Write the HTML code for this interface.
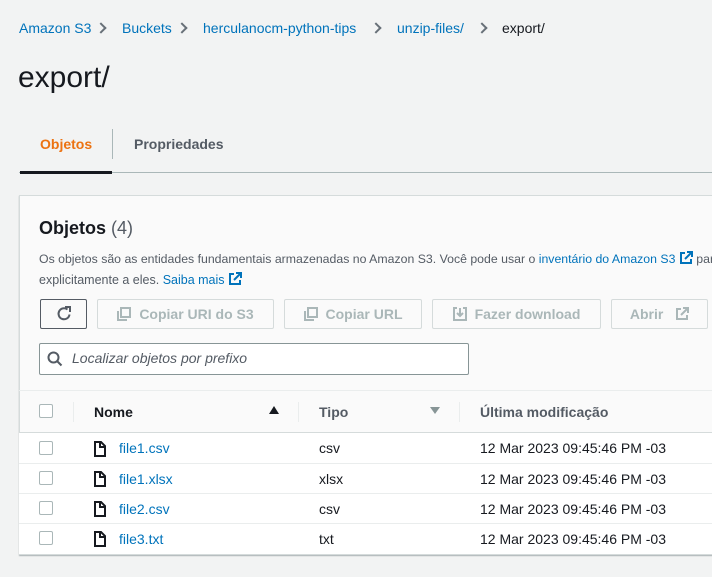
<!DOCTYPE html>
<html><head><meta charset="utf-8"><style>
*{box-sizing:border-box;margin:0;padding:0}
body{width:712px;height:577px;overflow:hidden;background:#f2f3f3;font-family:"Liberation Sans",sans-serif;color:#16191f;position:relative}
.a{position:absolute;white-space:nowrap}
.link{color:#0073bb}
.bc{top:20px;font-size:14px}
.chev{position:absolute;top:24px;width:8px;height:8px;border-right:2px solid #687078;border-top:2px solid #687078;transform:rotate(45deg)}
.btn{position:absolute;top:299px;height:30px;border:1px solid #d5dbdb;border-radius:2px;background:#fafafa;color:#aab7b8;font-weight:bold;font-size:14px;line-height:28px;text-align:center}
.btn svg{vertical-align:-2px;margin-right:8px}
.cb{position:absolute;left:39px;width:14px;height:14px;border:1px solid #aab7b8;border-radius:2px;background:#fff}
.row{position:absolute;left:19px;width:700px;height:30px;background:#fff;border-top:1px solid #eaeded}
.row span{position:absolute;top:7px;font-size:14px}
</style></head><body>
<div class="a bc link" style="left:19px">Amazon S3</div>
<div class="chev" style="left:97px"></div>
<div class="a bc link" style="left:122px">Buckets</div>
<div class="chev" style="left:178px"></div>
<div class="a bc link" style="left:203px">herculanocm-python-tips</div>
<div class="chev" style="left:372px"></div>
<div class="a bc link" style="left:397px">unzip-files/</div>
<div class="chev" style="left:478px"></div>
<div class="a bc" style="left:502px">export/</div>
<div class="a" style="left:18px;top:61px;font-size:30px">export/</div>
<div class="a" style="left:40px;top:136px;font-size:14px;font-weight:bold;color:#ec7211">Objetos</div>
<div class="a" style="left:112px;top:129px;width:1px;height:30px;background:#aab7b8"></div>
<div class="a" style="left:134px;top:136px;font-size:14px;font-weight:bold;color:#545b64">Propriedades</div>
<div class="a" style="left:19px;top:172px;width:700px;height:1px;background:#aab7b8"></div>
<div class="a" style="left:20px;top:171px;width:92px;height:3px;background:#16191f"></div>

<div class="a" style="left:19px;top:195px;width:700px;height:360px;background:#fafafa;border:1px solid #d5dbdb;box-shadow:0 1px 1px rgba(0,28,36,.3)"></div>
<div class="a" style="left:39px;top:218px;font-size:18px;font-weight:bold">Objetos <span style="font-weight:normal;color:#545b64">(4)</span></div>
<div class="a" style="left:39px;top:251px;font-size:12.3px;color:#545b64">Os objetos são as entidades fundamentais armazenadas no Amazon S3. Você pode usar o <span class="link">inventário do Amazon S3</span> <svg width="14" height="14" style="vertical-align:-2px"><path d="M6 2H2v10h10V8M8 1h5v5M13 1L6 8" fill="none" stroke="#0073bb" stroke-width="2"/></svg> para</div>
<div class="a" style="left:39px;top:272px;font-size:12.5px;color:#545b64">explicitamente a eles. <span class="link">Saiba mais</span> <svg width="14" height="14" style="vertical-align:-2px"><path d="M6 2H2v10h10V8M8 1h5v5M13 1L6 8" fill="none" stroke="#0073bb" stroke-width="2"/></svg></div>

<div class="btn" style="left:40px;width:47px;border-color:#545b64"><svg width="16" height="16" style="margin:0;vertical-align:-3px"><path d="M13.5 8.5A5.5 5.5 0 1 1 11.5 3.5" fill="none" stroke="#545b64" stroke-width="2"/><path d="M9 1h5v5" fill="none" stroke="#545b64" stroke-width="2"/></svg></div>
<div class="btn" style="left:97px;width:177px"><svg width="14" height="14"><path d="M4 1h9v9H4zM1 4v9h9" fill="none" stroke="#aab7b8" stroke-width="2"/></svg>Copiar URI do S3</div>
<div class="btn" style="left:284px;width:138px"><svg width="14" height="14"><path d="M4 1h9v9H4zM1 4v9h9" fill="none" stroke="#aab7b8" stroke-width="2"/></svg>Copiar URL</div>
<div class="btn" style="left:432px;width:169px"><svg width="14" height="14"><path d="M4 1H1v12h12V1h-3M7 1v8M4 6l3 3 3-3" fill="none" stroke="#aab7b8" stroke-width="2"/></svg>Fazer download</div>
<div class="btn" style="left:611px;width:97px">Abrir <svg width="14" height="14" style="margin:0 0 0 8px"><path d="M6 2H2v10h10V8M8 1h5v5M13 1L6 8" fill="none" stroke="#aab7b8" stroke-width="2"/></svg></div>

<div class="a" style="left:39px;top:343px;width:430px;height:32px;border:1px solid #879596;border-radius:2px;background:#fff"></div>
<svg class="a" style="left:47px;top:351px" width="16" height="16"><circle cx="6.5" cy="6.5" r="5" fill="none" stroke="#545b64" stroke-width="2"/><line x1="10" y1="10" x2="14.5" y2="14.5" stroke="#545b64" stroke-width="2"/></svg>
<div class="a" style="left:72px;top:350px;font-size:14px;font-style:italic;color:#545b64">Localizar objetos por prefixo</div>

<div class="a" style="left:19px;top:390px;width:700px;height:43px;border-top:1px solid #eaeded;border-bottom:1px solid #d5dbdb"></div>
<div class="cb" style="top:404px"></div>
<div class="a" style="left:73px;top:402px;width:1px;height:20px;background:#eaeded"></div>
<div class="a" style="left:94px;top:404px;font-size:14px;font-weight:bold">Nome</div>
<div class="a" style="left:269px;top:406px;width:0;height:0;border-left:5px solid transparent;border-right:5px solid transparent;border-bottom:8px solid #16191f"></div>
<div class="a" style="left:298px;top:402px;width:1px;height:20px;background:#eaeded"></div>
<div class="a" style="left:319px;top:404px;font-size:14px;font-weight:bold;color:#545b64">Tipo</div>
<div class="a" style="left:430px;top:407px;width:0;height:0;border-left:5px solid transparent;border-right:5px solid transparent;border-top:7px solid #879596"></div>
<div class="a" style="left:459px;top:402px;width:1px;height:20px;background:#eaeded"></div>
<div class="a" style="left:480px;top:404px;font-size:14px;font-weight:bold;color:#545b64">Última modificação</div>

<div class="row" style="top:433px;border-top:none"><span class="link" style="left:100px">file1.csv</span><span style="left:300px">csv</span><span style="left:461px">12 Mar 2023 09:45:46 PM -03</span></div>
<div class="row" style="top:463px"><span class="link" style="left:100px">file1.xlsx</span><span style="left:300px">xlsx</span><span style="left:461px">12 Mar 2023 09:45:46 PM -03</span></div>
<div class="row" style="top:493px"><span class="link" style="left:100px">file2.csv</span><span style="left:300px">csv</span><span style="left:461px">12 Mar 2023 09:45:46 PM -03</span></div>
<div class="row" style="top:523px;height:31px"><span class="link" style="left:100px">file3.txt</span><span style="left:300px">txt</span><span style="left:461px">12 Mar 2023 09:45:46 PM -03</span></div>
<div class="cb" style="top:441px"></div><div class="cb" style="top:471px"></div><div class="cb" style="top:501px"></div><div class="cb" style="top:531px"></div>
<svg class="a" style="left:94px;top:441px" width="12" height="135"><g fill="none" stroke="#16191f" stroke-width="2"><path d="M1 1h6l4 4v10H1zM6 1v5h5"/><path d="M1 31h6l4 4v10H1zM6 31v5h5"/><path d="M1 61h6l4 4v10H1zM6 61v5h5"/><path d="M1 91h6l4 4v10H1zM6 91v5h5"/></g></svg>
</body></html>
